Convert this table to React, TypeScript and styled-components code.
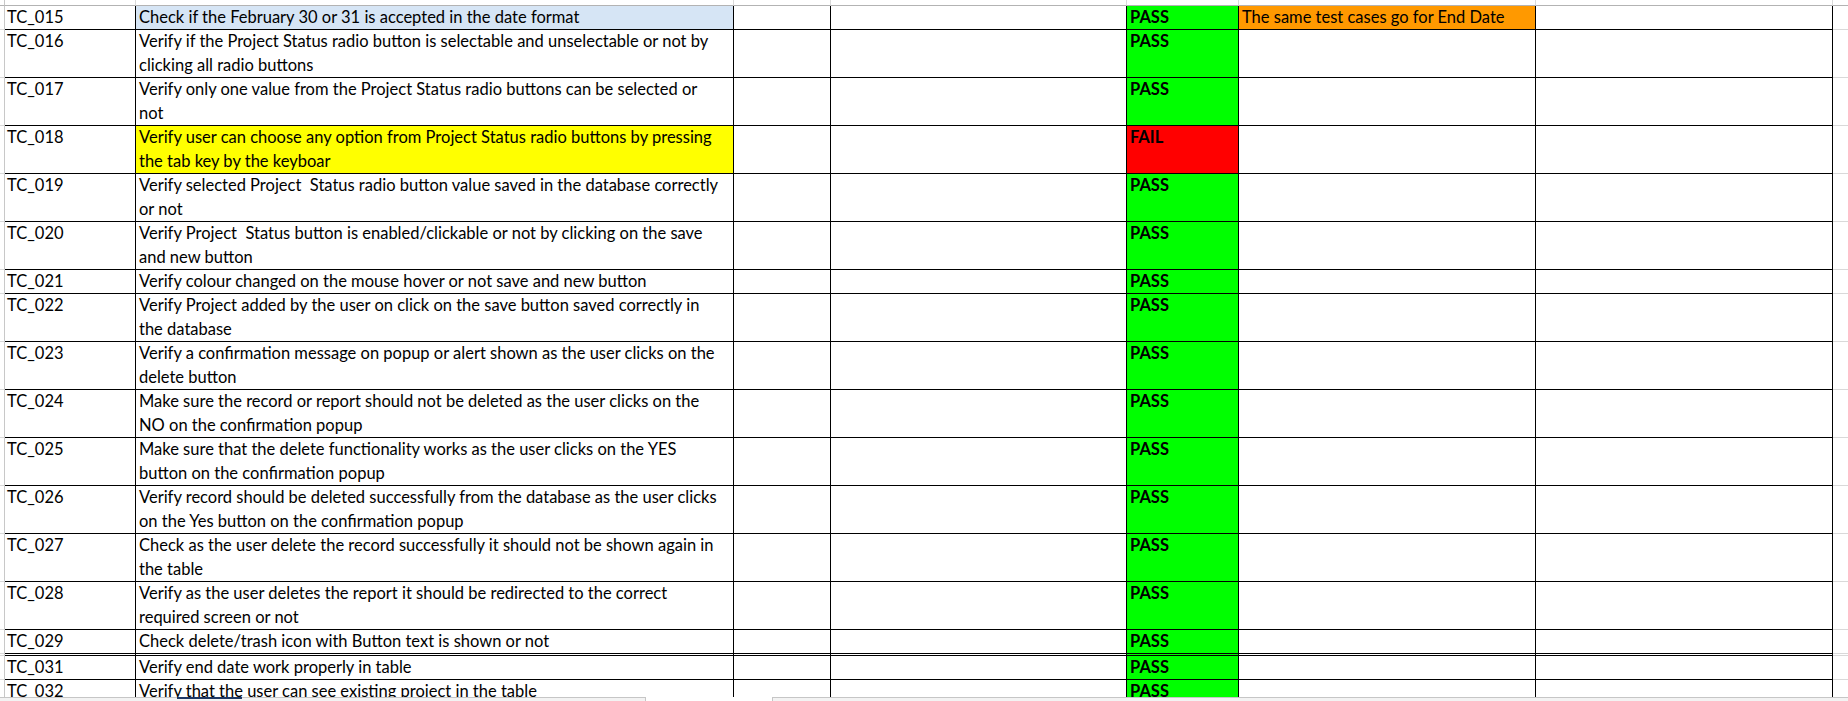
import React from "react";
import styled, { createGlobalStyle } from "styled-components";

const GlobalStyle = createGlobalStyle`
  html, body { margin: 0; padding: 0; background: #ffffff; }
  body { overflow: hidden; }
  #root { width: 1848px; height: 701px; }
`;

type Status = "PASS" | "FAIL";

interface TestRow {
  id: string;
  lines: string[];
  status: Status;
  highlight?: "blue" | "yellow";
  comment?: string;
}

const rows: TestRow[] = [
  { id: "TC_015", lines: ["Check if the February 30 or 31 is accepted in the date format"], status: "PASS", highlight: "blue", comment: "The same test cases go for End Date" },
  { id: "TC_016", lines: ["Verify if the Project Status radio button is selectable and unselectable or not by", "clicking all radio buttons"], status: "PASS" },
  { id: "TC_017", lines: ["Verify only one value from the Project Status radio buttons can be selected or", "not"], status: "PASS" },
  { id: "TC_018", lines: ["Verify user can choose any option from Project Status radio buttons by pressing", "the tab key by the keyboar"], status: "FAIL", highlight: "yellow" },
  { id: "TC_019", lines: ["Verify selected Project  Status radio button value saved in the database correctly", "or not"], status: "PASS" },
  { id: "TC_020", lines: ["Verify Project  Status button is enabled/clickable or not by clicking on the save", "and new button"], status: "PASS" },
  { id: "TC_021", lines: ["Verify colour changed on the mouse hover or not save and new button"], status: "PASS" },
  { id: "TC_022", lines: ["Verify Project added by the user on click on the save button saved correctly in", "the database"], status: "PASS" },
  { id: "TC_023", lines: ["Verify a confirmation message on popup or alert shown as the user clicks on the", "delete button"], status: "PASS" },
  { id: "TC_024", lines: ["Make sure the record or report should not be deleted as the user clicks on the", "NO on the confirmation popup"], status: "PASS" },
  { id: "TC_025", lines: ["Make sure that the delete functionality works as the user clicks on the YES", "button on the confirmation popup"], status: "PASS" },
  { id: "TC_026", lines: ["Verify record should be deleted successfully from the database as the user clicks", "on the Yes button on the confirmation popup"], status: "PASS" },
  { id: "TC_027", lines: ["Check as the user delete the record successfully it should not be shown again in", "the table"], status: "PASS" },
  { id: "TC_028", lines: ["Verify as the user deletes the report it should be redirected to the correct", "required screen or not"], status: "PASS" },
  { id: "TC_029", lines: ["Check delete/trash icon with Button text is shown or not"], status: "PASS" },
];

const tailRows: TestRow[] = [
  { id: "TC_031", lines: ["Verify end date work properly in table"], status: "PASS" },
  { id: "TC_032", lines: ["Verify that the user can see existing project in the table"], status: "PASS" },
];

const COLS = "5px 131px 598px 97px 296px 112px 297px 297px 15px";
const GRID = "#d9d9d9";
const LINE = "#000000";

const Sheet = styled.div`
  width: 1848px;
  height: 701px;
  display: flex;
  flex-direction: column;
  overflow: hidden;
  font-family: Lato, "Open Sans", "Liberation Sans", sans-serif;
  font-size: 16.5px;
  color: #000000;
`;

const Body = styled.div`
  flex: 1;
  min-height: 0;
  overflow: hidden;
  display: flex;
  flex-direction: column;
`;

const Row = styled.div<{ $h: number }>`
  display: grid;
  grid-template-columns: ${COLS};
  height: ${(p) => p.$h}px;
  flex: none;
`;

const TopRow = styled(Row)`
  & > div {
    border-bottom: 1px solid #b3b3b3;
  }
`;

const Gutter = styled.div`
  box-sizing: border-box;
  border-right: 1px solid #c8c8c8;
  border-bottom: 1px solid ${GRID};
`;

const Spill = styled.div`
  box-sizing: border-box;
  border-bottom: 1px solid ${GRID};
`;

const GridCell = styled.div`
  box-sizing: border-box;
  border-right: 1px solid ${GRID};
`;

const Cell = styled.div<{ $bg?: string; $bold?: boolean }>`
  box-sizing: border-box;
  border-right: 1px solid ${LINE};
  border-bottom: 1px solid ${LINE};
  background: ${(p) => p.$bg || "#ffffff"};
  padding: 0 0 0 3px;
  line-height: 23px;
  font-weight: ${(p) => (p.$bold ? 700 : 400)};
  white-space: pre;
  overflow: hidden;
`;

const IdCell = styled(Cell)`
  padding-left: 2px;
`;

const Line = styled.div`
  height: 24px;
`;

const BottomBar = styled.div`
  flex: none;
  height: 4px;
  display: flex;
  background: #ffffff;
`;

const TabStrip = styled.div`
  width: 646px;
  box-sizing: border-box;
  border-top: 1px solid #c6c6c6;
  border-right: 1px solid #c6c6c6;
  background: #f3f3f3;
  display: flex;
  padding-left: 177px;
`;

const ActiveTab = styled.div`
  width: 65px;
  border-top: 2px solid #1f3864;
  margin-top: -1px;
`;

const Scroller = styled.div`
  margin-left: 126px;
  flex: 1;
  box-sizing: border-box;
  border-top: 1px solid #c6c6c6;
  border-left: 1px solid #c6c6c6;
  background: #f3f3f3;
`;

const bgFor = (h?: "blue" | "yellow") =>
  h === "blue" ? "#d6e5f5" : h === "yellow" ? "#ffff00" : undefined;

const DataRow: React.FC<{ row: TestRow }> = ({ row }) => (
  <Row $h={24 * row.lines.length}>
    <Gutter />
    <IdCell>
      <Line>{row.id}</Line>
    </IdCell>
    <Cell $bg={bgFor(row.highlight)}>
      {row.lines.map((l, i) => (
        <Line key={i}>{l}</Line>
      ))}
    </Cell>
    <Cell />
    <Cell />
    <Cell $bold $bg={row.status === "PASS" ? "#00ff00" : "#ff0000"}>
      <Line>{row.status}</Line>
    </Cell>
    <Cell $bg={row.comment ? "#ff9900" : undefined}>
      {row.comment && <Line>{row.comment}</Line>}
    </Cell>
    <Cell />
    <Spill />
  </Row>
);

export default function App() {
  return (
    <>
      <GlobalStyle />
      <Sheet>
        <Body>
          <TopRow $h={6}>
            <Gutter />
            <GridCell />
            <GridCell />
            <GridCell />
            <GridCell />
            <GridCell />
            <GridCell />
            <GridCell />
            <Spill />
          </TopRow>
          {rows.map((r) => (
            <DataRow key={r.id} row={r} />
          ))}
          <Row $h={2}>
            <Gutter />
            <Cell />
            <Cell />
            <Cell />
            <Cell />
            <Cell $bg="#00ff00" />
            <Cell />
            <Cell />
            <Spill />
          </Row>
          {tailRows.map((r) => (
            <DataRow key={r.id} row={r} />
          ))}
        </Body>
        <BottomBar>
          <TabStrip>
            <ActiveTab />
          </TabStrip>
          <Scroller />
        </BottomBar>
      </Sheet>
    </>
  );
}
